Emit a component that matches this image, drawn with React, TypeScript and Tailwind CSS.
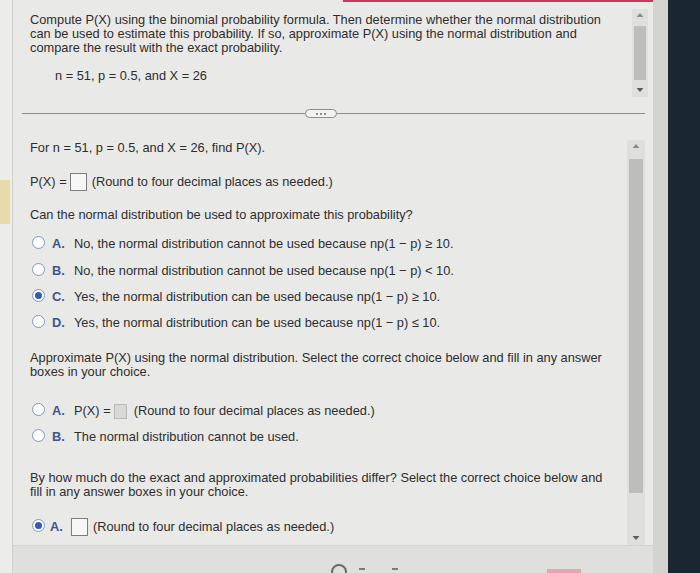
import React from "react";

const FONT = { fontFamily: '"Liberation Sans", Arial, Helvetica, sans-serif' };

function Radio({ checked = false }: { checked?: boolean }) {
  return (
    <span className="relative inline-block w-[13px] h-[13px] rounded-full border border-[#7f97c4] bg-white shrink-0">
      {checked && <span className="absolute left-[2px] top-[2px] w-[7px] h-[7px] rounded-full bg-[#2f5db5]" />}
    </span>
  );
}

function Box({ gray = false }: { gray?: boolean }) {
  return gray ? (
    <span className="inline-block w-[13px] h-[15px] border border-[#b9b9b9] bg-[#d9d9d8] shrink-0" />
  ) : (
    <span className="inline-block w-[17px] h-[18px] border border-[#7d7d7d] bg-[#f7f7f7] shrink-0" />
  );
}

function Option({ letter, checked, children, className = "" }: { letter: string; checked?: boolean; children: React.ReactNode; className?: string }) {
  return (
    <div className={`flex items-center h-[14px] ${className}`}>
      <div className="ml-[1px]">
        <Radio checked={checked} />
      </div>
      <span className="ml-[7px] w-[22px] font-bold text-[#3d5590]">{letter}.</span>
      <span>{children}</span>
    </div>
  );
}

function ScrollBar({ h, thumbTop, thumbH, w = 16 }: { h: number; thumbTop: number; thumbH: number; w?: number }) {
  return (
    <div className="relative bg-[#dfdfdd]" style={{ height: h, width: w }}>
      <svg className="absolute left-1/2 -translate-x-1/2 top-[4px]" width="7" height="4" viewBox="0 0 7 4">
        <path d="M0 4 L3.5 0 L7 4 Z" fill="#8d8d8d" />
      </svg>
      <div className="absolute left-[2px] right-[2px] bg-[#bdbdbb]" style={{ top: thumbTop, height: thumbH }} />
      <svg className="absolute left-1/2 -translate-x-1/2 bottom-[5px]" width="7" height="4" viewBox="0 0 7 4">
        <path d="M0 0 L3.5 4 L7 0 Z" fill="#5d5d5d" />
      </svg>
    </div>
  );
}

export default function App() {
  return (
    <div className="w-[700px] h-[573px] flex overflow-hidden bg-[#1b2633] text-[12.8px] leading-[14px] text-[#2e2e2e]" style={FONT}>
      {/* left strip */}
      <div className="w-[13px] shrink-0 border-r border-[#cfcfcc] bg-[#ececea] flex flex-col">
        <div className="h-[180px]" />
        <div className="h-[44px] w-[10px] bg-[#e7dbac]" />
      </div>

      {/* main panel */}
      <div className="w-[640px] shrink-0 flex flex-col bg-[#e9e9e7]">
        <div className="h-[2px] flex">
          <div className="w-[330px]" />
          <div className="flex-1 bg-[#c23a5c]" />
        </div>

        {/* top section */}
        <div className="h-[98px] flex">
          <div className="flex-1 pl-[17px] pt-[11px]">
            <p className="w-[582px]">
              Compute P(X) using the binomial probability formula. Then determine whether the normal distribution can be used to estimate this probability. If so, approximate P(X) using the normal distribution and compare the result with the exact probability.
            </p>
            <p className="mt-[14px] pl-[25px]">n = 51, p = 0.5, and X = 26</p>
          </div>
          <div className="pt-[7px] pr-[5px]">
            <ScrollBar h={88} thumbTop={17} thumbH={54} w={16} />
          </div>
        </div>

        {/* divider */}
        <div className="h-[40px] relative">
          <div className="absolute left-[9px] right-[8px] top-[13px] h-px bg-[#8e8e8c]" />
          <div className="absolute left-[292px] top-[9px] w-[32px] h-[9px] rounded-full border border-[#8e8e8c] bg-[#f2f2f0] flex items-center justify-center gap-[2px]">
            <span className="w-[2px] h-[2px] rounded-full bg-[#6a6a6a]" />
            <span className="w-[2px] h-[2px] rounded-full bg-[#6a6a6a]" />
            <span className="w-[2px] h-[2px] rounded-full bg-[#6a6a6a]" />
          </div>
        </div>

        {/* main section */}
        <div className="h-[405px] flex">
          <div className="flex-1 pl-[17px]">
            <p className="mt-[1px]">For n = 51, p = 0.5, and X = 26, find P(X).</p>
            <div className="mt-[18px] h-[18px] flex items-center">
              <span>P(X) =</span>
              <span className="ml-[3px] flex"><Box /></span>
              <span className="ml-[5px]">(Round to four decimal places as needed.)</span>
            </div>
            <p className="mt-[17px]">Can the normal distribution be used to approximate this probability?</p>
            <div className="pl-[1px]">
              <Option letter="A" className="mt-[15px]">No, the normal distribution cannot be used because np(1 − p) ≥ 10.</Option>
              <Option letter="B" className="mt-[13px]">No, the normal distribution cannot be used because np(1 − p) &lt; 10.</Option>
              <Option letter="C" checked className="mt-[12px]">Yes, the normal distribution can be used because np(1 − p) ≥ 10.</Option>
              <Option letter="D" className="mt-[12px]">Yes, the normal distribution can be used because np(1 − p) ≤ 10.</Option>
            </div>
            <p className="mt-[21px] w-[578px]">
              Approximate P(X) using the normal distribution. Select the correct choice below and fill in any answer boxes in your choice.
            </p>
            <div className="pl-[1px]">
              <Option letter="A" className="mt-[23px] !h-[18px]">
                <span className="flex items-center">
                  <span>P(X) =</span>
                  <span className="ml-[3px] flex"><Box gray /></span>
                  <span className="ml-[7px]">(Round to four decimal places as needed.)</span>
                </span>
              </Option>
              <Option letter="B" className="mt-[10px]">The normal distribution cannot be used.</Option>
            </div>
            <p className="mt-[27px] w-[578px]">
              By how much do the exact and approximated probabilities differ? Select the correct choice below and fill in any answer boxes in your choice.
            </p>
            <div className="mt-[19px] h-[18px] flex items-center pl-[1px]">
              <div className="ml-[1px]">
                <Radio checked />
              </div>
              <span className="ml-[5px] w-[21px] font-bold text-[#3d5590]">A.</span>
              <Box />
              <span className="ml-[5px]">(Round to four decimal places as needed.)</span>
            </div>
          </div>
          <div className="pr-[8px]">
            <ScrollBar h={405} thumbTop={19} thumbH={334} w={18} />
          </div>
        </div>

        {/* bottom band */}
        <div className="flex-1 bg-[#dfdfdd] border-t border-[#d3d3d1] relative">
          <div className="absolute left-[318px] top-[18px] w-[16px] h-[16px] rounded-full border-2 border-[#6a6a6a]" />
          <div className="absolute left-[346px] top-[22px] w-[6px] h-[2px] bg-[#7a7a7a]" />
          <div className="absolute left-[379px] top-[22px] w-[6px] h-[2px] bg-[#7a7a7a]" />
          <div className="absolute left-[534px] top-[23px] w-[34px] h-[4px] bg-[#e7a3b0]" />
        </div>
      </div>

      {/* window border */}
      <div className="w-[15px] shrink-0 bg-[#d3d3d1]" />
      <div className="flex-1 bg-[#1b2633]" />
    </div>
  );
}
